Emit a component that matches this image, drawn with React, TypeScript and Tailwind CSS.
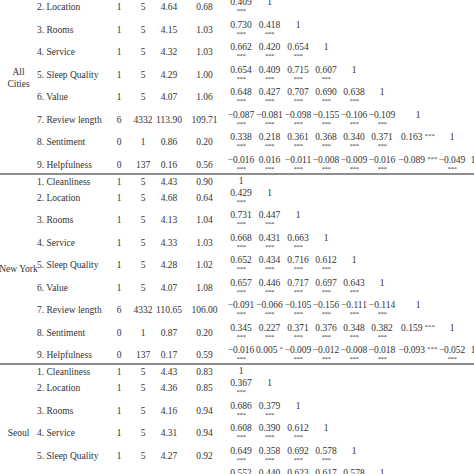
import React from 'react';

// One row of the descriptive stats + correlation table.
interface RowData {
  label: string;
  min: string;
  max: string;
  mean: string;
  sd: string;
  corr: string[];
}

type Kind = 'first' | 'mid' | 'last';

const cols =
  'grid grid-cols-[71px_22px_26px_26px_45px_28px_29px_28px_28px_28px_28px_44px_24px_18px]';

function CorrCell({ value, first }: { value: string; first: boolean }) {
  // "0.163 ***" -> stars inline, "1" -> plain, anything else -> stars below
  const parts = value.split(' ');
  if (parts.length > 1) {
    return (
      <div className="flex justify-center items-start">
        <span className="leading-[11px] whitespace-nowrap">{parts[0]}</span>
        <span className="ml-[2px] mt-[1px] text-[7px] leading-[7px] text-[#444]">{parts[1]}</span>
      </div>
    );
  }
  const below = value !== '1';
  return (
    <div className="flex flex-col items-center">
      <span className={`${first ? 'leading-[12px]' : 'leading-[11px]'} whitespace-nowrap`}>{value}</span>
      {below && <span className="text-[7px] leading-[6px] tracking-[-0.5px] text-[#444]">***</span>}
    </div>
  );
}

function Row({ r, kind }: { r: RowData; kind: Kind }) {
  const h = kind === 'first' ? 'h-[13px]' : kind === 'last' ? 'h-[18px]' : 'h-[22.5px]';
  const pad = kind === 'first' ? 'pt-0' : 'pt-[3px]';
  return (
    <div className={`${cols} ${h}`}>
      <div className={`${pad} leading-[15px] whitespace-nowrap`}>{r.label}</div>
      {[r.min, r.max, r.mean, r.sd].map((v, i) => (
        <div key={i} className={`${pad} leading-[15px] text-center whitespace-nowrap`}>
          {v}
        </div>
      ))}
      {r.corr.map((c, i) => (
        <CorrCell key={i} value={c} first={kind === 'first'} />
      ))}
    </div>
  );
}

function Section({
  name,
  rows,
  labelClass,
  last = false,
}: {
  name: React.ReactNode;
  rows: RowData[];
  labelClass: string;
  last?: boolean;
}) {
  return (
    <div className={`flex ${last ? '' : 'border-b-2 border-[#8e8e8e]'}`}>
      <div className={`w-[37px] shrink-0 flex justify-center ${labelClass}`}>
        <span className="text-center leading-[12px] whitespace-nowrap">{name}</span>
      </div>
      <div className="flex flex-col">
        {rows.map((r, i) => (
          <Row
            key={r.label}
            r={r}
            kind={i === 0 ? 'first' : i === rows.length - 1 && !last ? 'last' : 'mid'}
          />
        ))}
      </div>
    </div>
  );
}

const M = '\u2212';

const allCities: RowData[] = [
  { label: '1. Cleanliness', min: '1', max: '5', mean: '4.45', sd: '0.88', corr: ['1'] },
  { label: '2. Location', min: '1', max: '5', mean: '4.64', sd: '0.68', corr: ['0.409', '1'] },
  { label: '3. Rooms', min: '1', max: '5', mean: '4.15', sd: '1.03', corr: ['0.730', '0.418', '1'] },
  { label: '4. Service', min: '1', max: '5', mean: '4.32', sd: '1.03', corr: ['0.662', '0.420', '0.654', '1'] },
  { label: '5. Sleep Quality', min: '1', max: '5', mean: '4.29', sd: '1.00', corr: ['0.654', '0.409', '0.715', '0.607', '1'] },
  { label: '6. Value', min: '1', max: '5', mean: '4.07', sd: '1.06', corr: ['0.648', '0.427', '0.707', '0.690', '0.638', '1'] },
  {
    label: '7. Review length', min: '6', max: '4332', mean: '113.90', sd: '109.71',
    corr: [`${M}0.087`, `${M}0.081`, `${M}0.098`, `${M}0.155`, `${M}0.106`, `${M}0.109`, '1'],
  },
  {
    label: '8. Sentiment', min: '0', max: '1', mean: '0.86', sd: '0.20',
    corr: ['0.338', '0.218', '0.361', '0.368', '0.340', '0.371', '0.163 ***', '1'],
  },
  {
    label: '9. Helpfulness', min: '0', max: '137', mean: '0.16', sd: '0.56',
    corr: [`${M}0.016`, '0.016', `${M}0.011`, `${M}0.008`, `${M}0.009`, `${M}0.016`, `${M}0.089 ***`, `${M}0.049`, '1'],
  },
];

const newYork: RowData[] = [
  { label: '1. Cleanliness', min: '1', max: '5', mean: '4.43', sd: '0.90', corr: ['1'] },
  { label: '2. Location', min: '1', max: '5', mean: '4.68', sd: '0.64', corr: ['0.429', '1'] },
  { label: '3. Rooms', min: '1', max: '5', mean: '4.13', sd: '1.04', corr: ['0.731', '0.447', '1'] },
  { label: '4. Service', min: '1', max: '5', mean: '4.33', sd: '1.03', corr: ['0.668', '0.431', '0.663', '1'] },
  { label: '5. Sleep Quality', min: '1', max: '5', mean: '4.28', sd: '1.02', corr: ['0.652', '0.434', '0.716', '0.612', '1'] },
  { label: '6. Value', min: '1', max: '5', mean: '4.07', sd: '1.08', corr: ['0.657', '0.446', '0.717', '0.697', '0.643', '1'] },
  {
    label: '7. Review length', min: '6', max: '4332', mean: '110.65', sd: '106.00',
    corr: [`${M}0.091`, `${M}0.066`, `${M}0.105`, `${M}0.156`, `${M}0.111`, `${M}0.114`, '1'],
  },
  {
    label: '8. Sentiment', min: '0', max: '1', mean: '0.87', sd: '0.20',
    corr: ['0.345', '0.227', '0.371', '0.376', '0.348', '0.382', '0.159 ***', '1'],
  },
  {
    label: '9. Helpfulness', min: '0', max: '137', mean: '0.17', sd: '0.59',
    corr: [`${M}0.016`, '0.005 *', `${M}0.009`, `${M}0.012`, `${M}0.008`, `${M}0.018`, `${M}0.093 ***`, `${M}0.052`, '1'],
  },
];

const seoul: RowData[] = [
  { label: '1. Cleanliness', min: '1', max: '5', mean: '4.43', sd: '0.83', corr: ['1'] },
  { label: '2. Location', min: '1', max: '5', mean: '4.36', sd: '0.85', corr: ['0.367', '1'] },
  { label: '3. Rooms', min: '1', max: '5', mean: '4.16', sd: '0.94', corr: ['0.686', '0.379', '1'] },
  { label: '4. Service', min: '1', max: '5', mean: '4.31', sd: '0.94', corr: ['0.608', '0.390', '0.612', '1'] },
  { label: '5. Sleep Quality', min: '1', max: '5', mean: '4.27', sd: '0.92', corr: ['0.649', '0.358', '0.692', '0.578', '1'] },
  { label: '6. Value', min: '1', max: '5', mean: '4.08', sd: '0.97', corr: ['0.552', '0.440', '0.623', '0.617', '0.578', '1'] },
];

export default function App() {
  return (
    <div className="w-[474px] h-[474px] overflow-hidden bg-white text-[#333] text-[9.5px] font-['Liberation_Serif',serif]">
      <div className="-mt-[16px] w-[482px]">
        <Section
          name={
            <>
              All
              <br />
              Cities
            </>
          }
          rows={allCities}
          labelClass="items-center"
        />
        <Section name="New York" rows={newYork} labelClass="items-center" />
        <Section name="Seoul" rows={seoul} labelClass="items-start pt-[62px]" last />
      </div>
    </div>
  );
}
